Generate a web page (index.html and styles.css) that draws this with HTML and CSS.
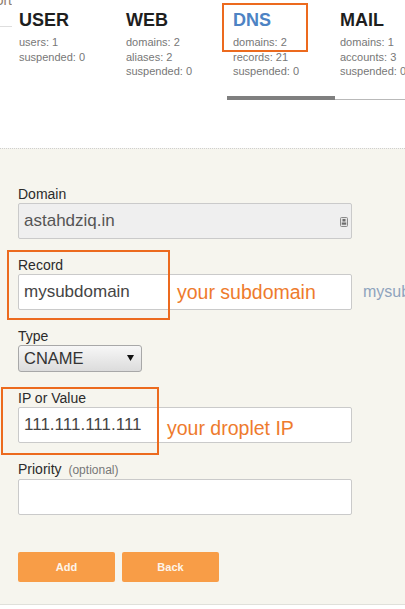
FILE: index.html
```html
<!DOCTYPE html>
<html lang="en">
<head>
<meta charset="utf-8">
<title>DNS - Add Record</title>
<link rel="stylesheet" href="styles.css">
</head>
<body>
<div class="page">
  <header class="summary">
    <div class="stub"><span class="stub-text">Support</span></div>
    <div class="col">
      <div class="col-title">USER</div>
      <div class="col-stats">users: 1<br>suspended: 0</div>
    </div>
    <div class="col">
      <div class="col-title">WEB</div>
      <div class="col-stats">domains: 2<br>aliases: 2<br>suspended: 0</div>
    </div>
    <div class="col">
      <div class="col-title col-title-active">DNS</div>
      <div class="col-stats">domains: 2<br>records: 21<br>suspended: 0</div>
    </div>
    <div class="col">
      <div class="col-title">MAIL</div>
      <div class="col-stats">domains: 1<br>accounts: 3<br>suspended: 0</div>
    </div>
  </header>

  <div class="tabs">
    <div class="tab-active"></div>
    <div class="tab-rest"></div>
  </div>

  <main class="form-area">
    <div class="field">
      <label class="label">Domain</label>
      <div class="input input-disabled">
        <span>astahdziq.in</span>
        <svg class="card-icon" width="8" height="10" viewBox="0 0 8 10">
          <rect x="0.5" y="0.5" width="7" height="9" rx="1" fill="#e4e4e4" stroke="#8a8a8a"/>
          <rect x="2.5" y="2" width="3" height="2.5" fill="#6d6d6d"/>
          <rect x="1.8" y="5.5" width="4.4" height="2.2" fill="#6d6d6d"/>
        </svg>
      </div>
    </div>

    <div class="field">
      <label class="label">Record</label>
      <div class="row">
        <input class="input" type="text" value="mysubdomain">
        <span class="hint">mysubdomain.astahdziq.in</span>
      </div>
    </div>

    <div class="field">
      <label class="label">Type</label>
      <div class="select">
        <span>CNAME</span>
        <svg class="select-arrow" width="7" height="6" viewBox="0 0 7 6"><polygon points="0,0 7,0 3.5,6" fill="#111"/></svg>
      </div>
    </div>

    <div class="field">
      <label class="label">IP or Value</label>
      <input class="input" type="text" value="111.111.111.111">
    </div>

    <div class="field">
      <label class="label">Priority <span class="optional">(optional)</span></label>
      <input class="input" type="text" value="">
    </div>

    <div class="buttons">
      <button class="btn">Add</button>
      <button class="btn">Back</button>
    </div>
  </main>

  <div class="note-box note-dns"></div>
  <div class="note-box note-record"></div>
  <div class="note-box note-ip"></div>
  <div class="note-text note-text-record">your subdomain</div>
  <div class="note-text note-text-ip">your droplet IP</div>
</div>
</body>
</html>
```

FILE: styles.css
```css
* { box-sizing: border-box; }

html, body {
  margin: 0;
  padding: 0;
  background: #ffffff;
}

body {
  font-family: "Liberation Sans", Arial, sans-serif;
  color: #333;
  overflow: hidden;
}

.page {
  position: relative;
  width: 405px;
  height: 609px;
  overflow: hidden;
  white-space: nowrap;
}

/* ---------- summary header ---------- */
.summary {
  display: flex;
  align-items: flex-start;
}

.stub {
  flex: 0 0 12px;
  width: 12px;
  height: 27px;
  margin-right: 7px;
  border-bottom: 1px solid #dedede;
  overflow: hidden;
  display: flex;
  justify-content: flex-end;
}

.stub-text {
  display: block;
  flex-shrink: 0;
  margin-top: -8px;
  font-size: 14px;
  line-height: 16px;
  color: #8d7d6f;
}

.col {
  flex: 0 0 107px;
  width: 107px;
  padding-top: 9px;
}

.col-title {
  font-size: 18px;
  line-height: 22px;
  font-weight: bold;
  color: #1e1e1e;
  margin-bottom: 4px;
}

.col-title-active {
  color: #4d83c4;
}

.col-stats {
  font-size: 11px;
  line-height: 14.5px;
  color: #777;
}

/* ---------- tabs ---------- */
.tabs {
  display: flex;
  align-items: flex-end;
  margin-top: 17.5px;
  margin-left: 227px;
  height: 4px;
}

.tab-active {
  flex: 0 0 108px;
  height: 4px;
  background: #7f7f7f;
}

.tab-rest {
  flex: 1;
  height: 1px;
  background: #b9b9b9;
}

/* ---------- form ---------- */
.form-area {
  margin-top: 48px;
  border-top: 1px dotted #cfcfcf;
  border-bottom: 1px solid #e0e0da;
  background: #f6f5ee;
  padding: 37px 0 22px 18px;
}

.field + .field {
  margin-top: 18px;
}

.label {
  display: block;
  font-size: 14px;
  line-height: 17px;
  color: #2b2b2b;
}

.optional {
  font-size: 12px;
  color: #777;
  margin-left: 3px;
}

.row {
  display: flex;
  align-items: center;
}

.input {
  display: flex;
  align-items: center;
  flex-shrink: 0;
  width: 334px;
  height: 36px;
  margin: 0;
  padding: 0 5px;
  border: 1px solid #cacaca;
  border-radius: 2px;
  background: #ffffff;
  font-family: "Liberation Sans", Arial, sans-serif;
  font-size: 17px;
  color: #454545;
  outline: none;
}

.input-disabled {
  background: #efefef;
  color: #555;
  justify-content: space-between;
  padding-right: 3px;
}

.card-icon {
  display: block;
  margin-top: 1px;
}

.hint {
  flex-shrink: 0;
  margin-left: 11px;
  font-size: 16px;
  color: #8ea3bd;
}

.select {
  display: flex;
  align-items: center;
  justify-content: space-between;
  width: 124px;
  height: 27px;
  padding: 0 7px 0 5px;
  border: 1px solid #a8a8a8;
  border-radius: 3px;
  background: linear-gradient(#f7f7f7, #dcdcdc);
  font-size: 16.5px;
  color: #333;
}

.select-arrow {
  display: block;
  margin-top: -2px;
}

.buttons {
  display: flex;
  gap: 7px;
  margin-top: 37px;
}

.btn {
  width: 97px;
  height: 30px;
  border: none;
  border-radius: 2px;
  background: #f89d47;
  color: #fdf4ea;
  font-family: "Liberation Sans", Arial, sans-serif;
  font-size: 11px;
  font-weight: bold;
  padding: 0;
}

/* ---------- annotations (overlay) ---------- */
.note-box {
  position: absolute;
  border: 2px solid #ec6a1e;
}

.note-dns {
  left: 222px;
  top: 3px;
  width: 86px;
  height: 49px;
}

.note-record {
  left: 7px;
  top: 250px;
  width: 163px;
  height: 70px;
}

.note-ip {
  left: 1px;
  top: 387px;
  width: 158px;
  height: 68px;
}

.note-text {
  position: absolute;
  font-size: 19.5px;
  line-height: 24px;
  color: #ee7b2d;
}

.note-text-record {
  left: 177px;
  top: 280px;
}

.note-text-ip {
  left: 167px;
  top: 416px;
}
```
